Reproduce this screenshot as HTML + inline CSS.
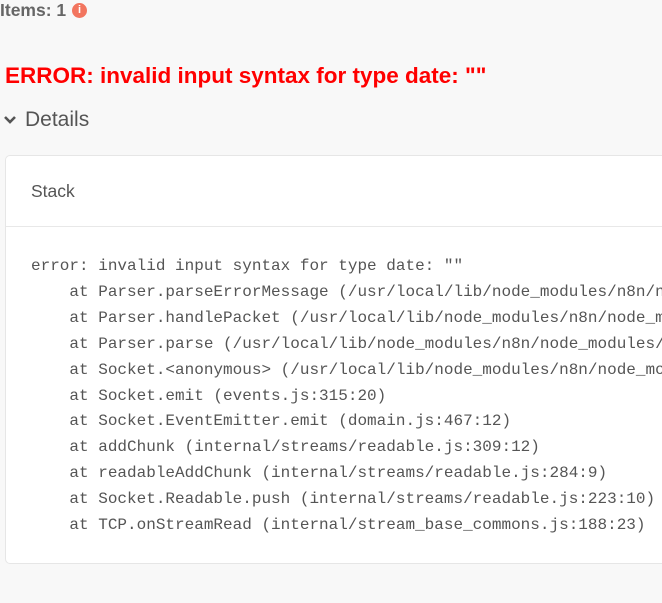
<!DOCTYPE html>
<html><head><style>
html,body{margin:0;width:662px;height:603px;overflow:hidden}
body{background:#f8f8f8;font-family:"Liberation Sans",sans-serif;position:relative}
.items{position:absolute;left:0;top:0px;font-size:17.5px;font-weight:bold;color:#666;}
.info{position:absolute;left:72px;top:3px;width:15px;height:15px;border-radius:50%;background:#f2755f;color:#fff;font-size:11px;font-weight:bold;text-align:center;line-height:15px}
.err{position:absolute;left:5px;top:63px;font-size:22.5px;font-weight:bold;color:#f00;white-space:nowrap}
.det{position:absolute;left:3px;top:108px;font-size:21px;color:#555;}
.card{position:absolute;left:5px;top:155px;width:656px;height:407px;background:#fff;border:1px solid #e6e6e6;border-right:none;border-radius:5px 0 0 5px;overflow:hidden}
.hd{height:70px;border-bottom:1px solid #e8e8e8;font-size:17.5px;color:#555;line-height:70px;padding-left:25px}
pre{margin:0;position:absolute;left:25px;top:98px;font-family:"Liberation Mono",monospace;font-size:16px;letter-spacing:0px;line-height:25.9px;color:#555}
</style></head><body>
<div class="items">Items: 1</div><div class="info">i</div>
<div class="err">ERROR: invalid input syntax for type date: ""</div>
<div class="det"><svg width="14" height="12" viewBox="0 0 14 12" style="margin-right:8px"><path d="M2 3l5 5 5-5" stroke="#555" stroke-width="2.6" fill="none"/></svg>Details</div>
<div class="card"><div class="hd">Stack</div>
<pre>error: invalid input syntax for type date: ""
    at Parser.parseErrorMessage (/usr/local/lib/node_modules/n8n/node_modules/pg-protocol/dist/parser.js:278:15)
    at Parser.handlePacket (/usr/local/lib/node_modules/n8n/node_modules/pg-protocol/dist/parser.js:126:29)
    at Parser.parse (/usr/local/lib/node_modules/n8n/node_modules/pg-protocol/dist/parser.js:39:38)
    at Socket.&lt;anonymous&gt; (/usr/local/lib/node_modules/n8n/node_modules/pg-protocol/dist/index.js:10:42)
    at Socket.emit (events.js:315:20)
    at Socket.EventEmitter.emit (domain.js:467:12)
    at addChunk (internal/streams/readable.js:309:12)
    at readableAddChunk (internal/streams/readable.js:284:9)
    at Socket.Readable.push (internal/streams/readable.js:223:10)
    at TCP.onStreamRead (internal/stream_base_commons.js:188:23)</pre>
</div>
</body></html>
